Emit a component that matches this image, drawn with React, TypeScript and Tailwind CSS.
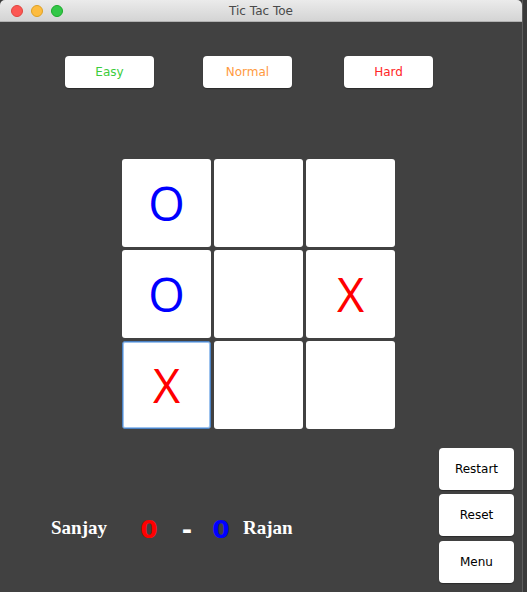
import React from "react";

const ui = { fontFamily: '"DejaVu Sans", "Liberation Sans", sans-serif' };
const mark = { fontFamily: '"Open Sans", "Liberation Sans", sans-serif' };
const serif = { fontFamily: '"Liberation Serif", "DejaVu Serif", serif' };
const boldSans = { fontFamily: '"DejaVu Sans", "Liberation Sans", sans-serif' };

type Cell = { v: string; focus?: boolean };

const cells: Cell[] = [
  { v: "O" }, { v: "" }, { v: "" },
  { v: "O" }, { v: "" }, { v: "X" },
  { v: "X", focus: true }, { v: "" }, { v: "" },
];

function TopButton({ label, color, className }: { label: string; color: string; className?: string }) {
  return (
    <button
      className={`w-[89px] h-[32px] bg-white rounded-[4px] text-[12px] flex items-center justify-center shadow-[0_1px_1px_rgba(0,0,0,0.35)] ${color} ${className ?? ""}`}
      style={ui}
    >
      {label}
    </button>
  );
}

function SideButton({ label, className }: { label: string; className?: string }) {
  return (
    <button
      className={`w-[75px] h-[42px] bg-white rounded-[4px] text-[12px] text-black flex items-center justify-center shadow-[0_1px_1px_rgba(0,0,0,0.35)] ${className ?? ""}`}
      style={ui}
    >
      {label}
    </button>
  );
}

export default function App() {
  return (
    <div className="w-[527px] h-[592px] bg-[#3a3a3a] flex overflow-hidden">
      <div className="w-[523px] h-full flex flex-col border-r border-[#5e5e5e]">
        {/* Title bar */}
        <div className="h-[22px] shrink-0 rounded-t-[5px] bg-gradient-to-b from-[#ebebeb] to-[#d4d4d4] border-b border-[#b1b1b1] grid grid-cols-[1fr_auto_1fr] items-center">
          <div className="flex items-center gap-[8px] pl-[11px]">
            <span className="w-[12px] h-[12px] rounded-full bg-[#fc5753] border border-[#e0443e]" />
            <span className="w-[12px] h-[12px] rounded-full bg-[#fdbc40] border border-[#dea123]" />
            <span className="w-[12px] h-[12px] rounded-full bg-[#33c748] border border-[#1aab29]" />
          </div>
          <div className="text-[12px] text-[#4a4a4a] leading-none" style={ui}>
            Tic Tac Toe
          </div>
          <div />
        </div>

        {/* Content */}
        <div className="flex-1 bg-[#414141] flex flex-col">
          <div className="flex pt-[34px] pl-[65px]">
            <TopButton label="Easy" color="text-[#3ccc3c]" />
            <TopButton label="Normal" color="text-[#ff9a40]" className="ml-[49px]" />
            <TopButton label="Hard" color="text-[#ff2626]" className="ml-[52px]" />
          </div>

          <div className="mt-[71px] ml-[122px] grid grid-cols-[89px_89px_89px] auto-rows-[88px] gap-[3px] w-max">
            {cells.map((c, i) => (
              <div
                key={i}
                className={`bg-white rounded-[3px] flex items-center justify-center ${
                  c.focus ? "border border-[#4b82c4] shadow-[inset_0_0_0_1px_#9cc2ee]" : ""
                }`}
              >
                <span
                  className={`text-[47px] leading-none ${c.v === "O" ? "text-[#0000ff]" : "text-[#ff0000]"}`}
                  style={mark}
                >
                  {c.v}
                </span>
              </div>
            ))}
          </div>

          <div className="mt-[19px] flex">
            <div className="mt-[66px] pl-[51px] flex items-baseline text-white font-bold">
              <span className="w-[80px] text-[19px] leading-[24px]" style={serif}>
                Sanjay
              </span>
              <span className="w-[36px] text-center text-[25px] leading-[24px] text-[#ff0000] font-bold inline-block translate-y-[4px]" style={boldSans}>
                0
              </span>
              <span className="w-[40px] text-center text-[25px] leading-[24px] font-bold inline-block translate-y-[4px]" style={boldSans}>
                -
              </span>
              <span className="w-[28px] text-center text-[25px] leading-[24px] text-[#0000ff] font-bold inline-block translate-y-[4px]" style={boldSans}>
                0
              </span>
              <span className="pl-[8px] text-[19px] leading-[24px]" style={serif}>
                Rajan
              </span>
            </div>
            <div className="ml-auto mr-[8px] flex flex-col">
              <SideButton label="Restart" />
              <SideButton label="Reset" className="mt-[4px]" />
              <SideButton label="Menu" className="mt-[5px]" />
            </div>
          </div>
        </div>
      </div>
    </div>
  );
}
